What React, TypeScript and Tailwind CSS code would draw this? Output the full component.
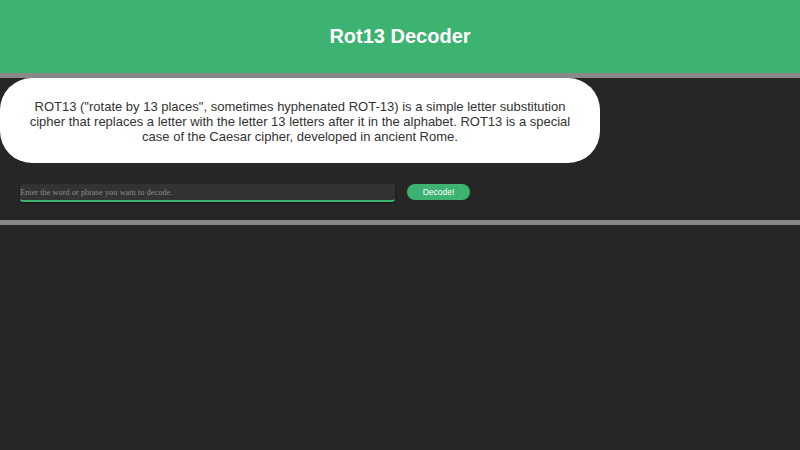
import React from "react";

export default function App() {
  return (
    <div className="min-h-[450px] w-full bg-[#262626] font-['Liberation_Sans',Arial,sans-serif]">
      <header className="h-[73px] bg-[#3cb371] flex items-center justify-center">
        <h1 className="text-white text-[20px] font-bold mb-[2px]">Rot13 Decoder</h1>
      </header>
      <div className="h-[5px] bg-[#888888]" />
      <div className="w-[600px] h-[85px] bg-white rounded-[32px] flex items-center justify-center px-[25px]">
        <p className="text-[#333333] text-[13px] leading-[15px] text-center mt-[1px]">
          ROT13 ("rotate by 13 places", sometimes hyphenated ROT-13) is a simple letter substitution cipher that replaces a letter with the letter 13 letters after it in the alphabet. ROT13 is a special case of the Caesar cipher, developed in ancient Rome.
        </p>
      </div>
      <div className="flex items-start pl-[20px] pt-[21px] h-[57px] gap-[12px]">
        <input
          className="w-[375px] h-[18px] bg-[#333333] rounded-[3px] border-b-2 border-[#3cb371] shadow-[0_1px_2px_rgba(0,0,0,0.5)] text-[8.4px] text-[#ccc] placeholder:text-[#8a8a8a] outline-none px-0 font-['Liberation_Serif','Times_New_Roman',serif]"
          placeholder="Enter the word or phrase you want to decode."
        />
        <button className="w-[63px] h-[16px] rounded-full bg-[#3cb371] text-white text-[8.5px] leading-[16px]">
          Decode!
        </button>
      </div>
      <div className="h-[5px] bg-[#888888]" />
    </div>
  );
}
